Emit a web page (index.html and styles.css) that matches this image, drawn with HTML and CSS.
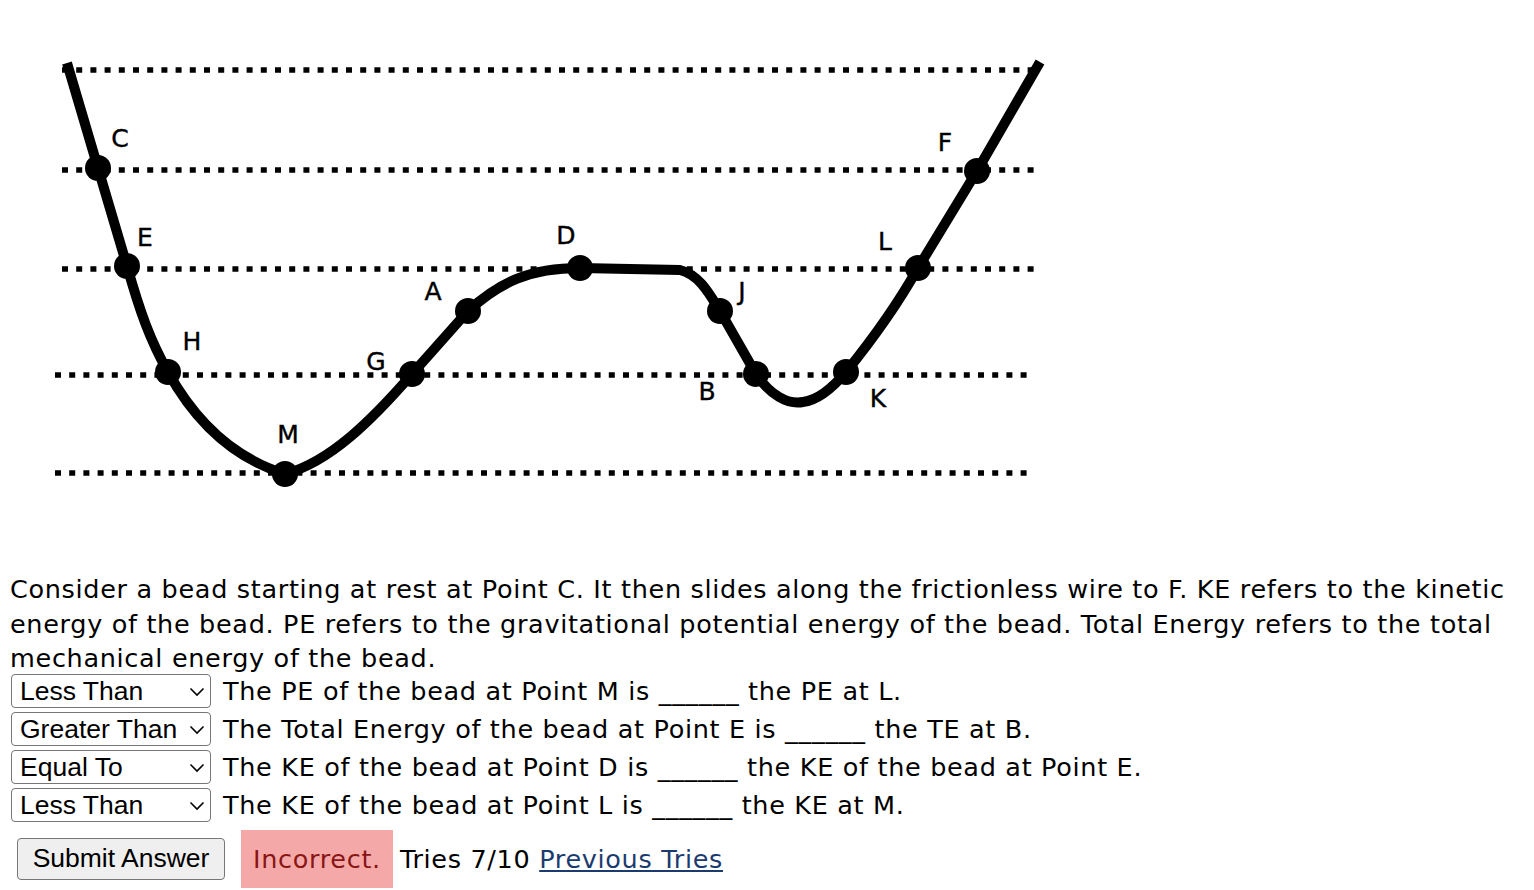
FILE: index.html
```html
<!DOCTYPE html>
<html>
<head>
<meta charset="utf-8">
<link rel="stylesheet" href="styles.css">
</head>
<body>
<div class="figure">
<svg class="diagram" width="1060" height="560" viewBox="0 0 1060 560" xmlns="http://www.w3.org/2000/svg">
  <g class="dots" stroke="#000" stroke-width="5.5" fill="none" stroke-dasharray="6 8.2">
    <line x1="62" y1="70" x2="1038" y2="70"/>
    <line x1="62" y1="170" x2="1038" y2="170"/>
    <line x1="62" y1="269" x2="1038" y2="269"/>
    <line x1="55" y1="375" x2="1032" y2="375"/>
    <line x1="55" y1="473" x2="1032" y2="473"/>
  </g>
  <path d="M 67 63 L 98 168 L 127 266 C 140 312, 150 340, 168 372 C 200 430, 240 460, 285 474 C 330 462, 372 420, 412 374 L 468 311 C 500 282, 530 268, 580 268 L 680 270 C 700 275, 710 295, 720 311 L 756 374 C 770 395, 788 405, 803 402 C 820 400, 835 385, 846 372 C 880 330, 900 300, 918 268 L 977 171 L 1040 62" stroke="#000" stroke-width="10" fill="none" stroke-linejoin="round"/>
  <g fill="#000">
    <circle cx="98" cy="168" r="13"/>
    <circle cx="127" cy="266" r="13"/>
    <circle cx="168" cy="372" r="13"/>
    <circle cx="285" cy="474" r="13"/>
    <circle cx="412" cy="374" r="13"/>
    <circle cx="468" cy="311" r="13"/>
    <circle cx="580" cy="268" r="13"/>
    <circle cx="720" cy="311" r="13"/>
    <circle cx="756" cy="374" r="13"/>
    <circle cx="846" cy="372" r="13"/>
    <circle cx="918" cy="268" r="13"/>
    <circle cx="977" cy="171" r="13"/>
  </g>
  <g class="labels" text-anchor="middle">
    <text x="120" y="147">C</text>
    <text x="145" y="246">E</text>
    <text x="192" y="350">H</text>
    <text x="288" y="443">M</text>
    <text x="376" y="370">G</text>
    <text x="433" y="300">A</text>
    <text x="566" y="244">D</text>
    <text x="742" y="300">J</text>
    <text x="707" y="400">B</text>
    <text x="878" y="407">K</text>
    <text x="885" y="250">L</text>
    <text x="945" y="151">F</text>
  </g>
</svg>
</div>
<div class="content">
<p class="intro">Consider a bead starting at rest at Point C. It then slides along the frictionless wire to F. KE refers to the kinetic energy of the bead. PE refers to the gravitational potential energy of the bead. Total Energy refers to the total mechanical energy of the bead.</p>
<div class="rows">
  <div class="row">
    <span class="sel"><select><option>Less Than</option><option>Greater Than</option><option>Equal To</option></select><svg class="chev" width="16" height="10" viewBox="0 0 16 10"><path d="M1.5 1.5 L8 8 L14.5 1.5" stroke="#000" stroke-width="1.6" fill="none"/></svg></span>
    <span class="stmt">The PE of the bead at Point M is ______ the PE at L.</span>
  </div>
  <div class="row">
    <span class="sel"><select><option>Greater Than</option><option>Less Than</option><option>Equal To</option></select><svg class="chev" width="16" height="10" viewBox="0 0 16 10"><path d="M1.5 1.5 L8 8 L14.5 1.5" stroke="#000" stroke-width="1.6" fill="none"/></svg></span>
    <span class="stmt">The Total Energy of the bead at Point E is ______ the TE at B.</span>
  </div>
  <div class="row">
    <span class="sel"><select><option>Equal To</option><option>Less Than</option><option>Greater Than</option></select><svg class="chev" width="16" height="10" viewBox="0 0 16 10"><path d="M1.5 1.5 L8 8 L14.5 1.5" stroke="#000" stroke-width="1.6" fill="none"/></svg></span>
    <span class="stmt">The KE of the bead at Point D is ______ the KE of the bead at Point E.</span>
  </div>
  <div class="row">
    <span class="sel"><select><option>Less Than</option><option>Greater Than</option><option>Equal To</option></select><svg class="chev" width="16" height="10" viewBox="0 0 16 10"><path d="M1.5 1.5 L8 8 L14.5 1.5" stroke="#000" stroke-width="1.6" fill="none"/></svg></span>
    <span class="stmt">The KE of the bead at Point L is ______ the KE at M.</span>
  </div>
</div>
<div class="actions">
  <button class="submit">Submit Answer</button>
  <span class="incorrect">Incorrect.</span>
  <span class="tries">Tries 7/10 <a href="#" class="prev">Previous Tries</a></span>
</div>
</div>
</body>
</html>
```

FILE: styles.css
```css
html, body {
  margin: 0;
  padding: 0;
  background: #fff;
}
body {
  font-family: "DejaVu Sans", Verdana, sans-serif;
  font-size: 25.5px;
  letter-spacing: 0.68px;
  color: #000;
  overflow: hidden;
}
.figure {
  height: 572px;
}
.diagram {
  display: block;
}
.labels text {
  font-family: "DejaVu Sans", sans-serif;
  font-size: 25px;
  letter-spacing: 0;
  fill: #000;
  stroke: #000;
  stroke-width: 0.4px;
}
.content {
  padding: 0 10px;
}
.intro {
  margin: 0;
  line-height: 34.5px;
}
.rows {
  display: flex;
  flex-direction: column;
  gap: 4px;
  margin-top: -2px;
}
.row {
  display: flex;
  align-items: center;
  gap: 12px;
  height: 34px;
}
.sel {
  position: relative;
  display: inline-block;
  margin-left: 1px;
  letter-spacing: 0;
}
.sel select {
  appearance: none;
  -webkit-appearance: none;
  width: 200px;
  height: 34px;
  border: 1px solid #767676;
  border-radius: 4px;
  background: #fff;
  font-family: "Liberation Sans", Arial, sans-serif;
  font-size: 26.5px;
  color: #000;
  padding: 0 0 0 8px;
  margin: 0;
  display: block;
}
.chev {
  position: absolute;
  right: 6px;
  top: 13px;
  pointer-events: none;
}
.stmt {
  white-space: nowrap;
}
.actions {
  display: flex;
  align-items: center;
  margin-top: 8px;
  height: 58px;
}
.submit {
  font-family: "Liberation Sans", Arial, sans-serif;
  font-size: 26.5px;
  letter-spacing: 0;
  color: #000;
  background: #efefef;
  border: 1px solid #767676;
  border-radius: 4px;
  height: 42px;
  width: 208px;
  padding: 0;
  margin-left: 7px;
}
.incorrect {
  background: #f4a9a8;
  color: #8a1515;
  height: 58px;
  display: flex;
  align-items: center;
  padding: 0 12px;
  margin-left: 16px;
}
.tries {
  margin-left: 7px;
}
.prev {
  color: #1b3b6f;
  text-decoration: underline;
}
```
